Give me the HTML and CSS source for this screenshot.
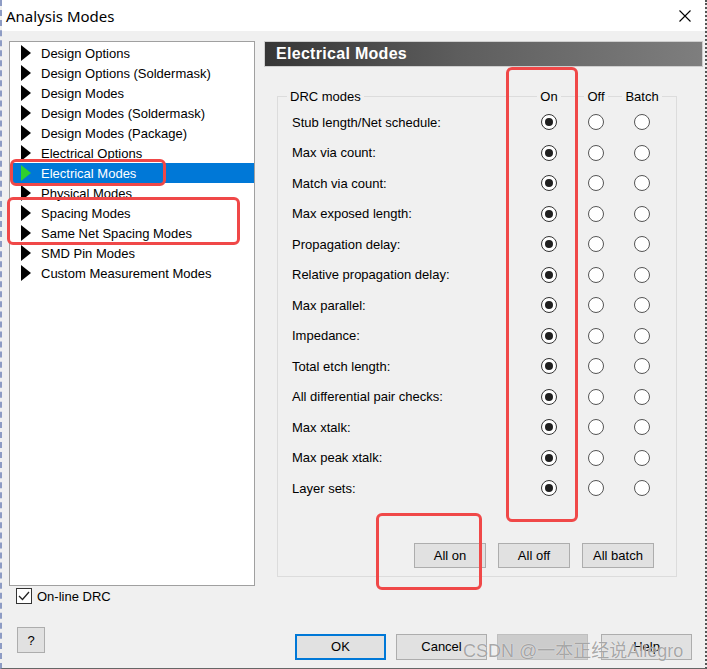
FILE: index.html
```html
<!DOCTYPE html>
<html lang="en">
<head>
    <meta charset="UTF-8">
    <title>Analysis Modes</title>
    <link rel="stylesheet" href="styles.css">
</head>
<body>
<div class="window">
    <div class="titlebar">
        <span class="title">Analysis Modes</span>
        <svg class="close" width="12" height="12" viewBox="0 0 12 12"><path d="M0.5 0.5 L11.5 11.5 M11.5 0.5 L0.5 11.5" stroke="#000" stroke-width="1.1"/></svg>
    </div>

    <div class="client">
        <div class="left">
            <div class="tree">
                <div class="item"><span class="arrow"></span>Design Options</div>
                <div class="item"><span class="arrow"></span>Design Options (Soldermask)</div>
                <div class="item"><span class="arrow"></span>Design Modes</div>
                <div class="item"><span class="arrow"></span>Design Modes (Soldermask)</div>
                <div class="item"><span class="arrow"></span>Design Modes (Package)</div>
                <div class="item"><span class="arrow"></span>Electrical Options</div>
                <div class="item selected"><span class="arrow"></span>Electrical Modes</div>
                <div class="item"><span class="arrow"></span>Physical Modes</div>
                <div class="item"><span class="arrow"></span>Spacing Modes</div>
                <div class="item"><span class="arrow"></span>Same Net Spacing Modes</div>
                <div class="item"><span class="arrow"></span>SMD Pin Modes</div>
                <div class="item"><span class="arrow"></span>Custom Measurement Modes</div>
            </div>
            <label class="checkrow">
                <span class="checkbox"><svg width="14" height="14" viewBox="0 0 14 14"><path d="M2 7 L5.5 10.5 L12 3" fill="none" stroke="#222" stroke-width="1.3"/></svg></span>
                On-line DRC
            </label>
            <button class="btn help-q">?</button>
        </div>

        <div class="right">
            <div class="header">Electrical Modes</div>

            <div class="group">
                <div class="grid heading">
                    <span class="legend">DRC modes</span>
                    <span class="col"><span class="legend">On</span></span>
                    <span class="col"><span class="legend">Off</span></span>
                    <span class="col"><span class="legend">Batch</span></span>
                </div>
                <div class="rows">
                    <div class="grid row"><span>Stub length/Net schedule:</span><span class="col"><i class="radio on"></i></span><span class="col"><i class="radio"></i></span><span class="col"><i class="radio"></i></span></div>
                    <div class="grid row"><span>Max via count:</span><span class="col"><i class="radio on"></i></span><span class="col"><i class="radio"></i></span><span class="col"><i class="radio"></i></span></div>
                    <div class="grid row"><span>Match via count:</span><span class="col"><i class="radio on"></i></span><span class="col"><i class="radio"></i></span><span class="col"><i class="radio"></i></span></div>
                    <div class="grid row"><span>Max exposed length:</span><span class="col"><i class="radio on"></i></span><span class="col"><i class="radio"></i></span><span class="col"><i class="radio"></i></span></div>
                    <div class="grid row"><span>Propagation delay:</span><span class="col"><i class="radio on"></i></span><span class="col"><i class="radio"></i></span><span class="col"><i class="radio"></i></span></div>
                    <div class="grid row"><span>Relative propagation delay:</span><span class="col"><i class="radio on"></i></span><span class="col"><i class="radio"></i></span><span class="col"><i class="radio"></i></span></div>
                    <div class="grid row"><span>Max parallel:</span><span class="col"><i class="radio on"></i></span><span class="col"><i class="radio"></i></span><span class="col"><i class="radio"></i></span></div>
                    <div class="grid row"><span>Impedance:</span><span class="col"><i class="radio on"></i></span><span class="col"><i class="radio"></i></span><span class="col"><i class="radio"></i></span></div>
                    <div class="grid row"><span>Total etch length:</span><span class="col"><i class="radio on"></i></span><span class="col"><i class="radio"></i></span><span class="col"><i class="radio"></i></span></div>
                    <div class="grid row"><span>All differential pair checks:</span><span class="col"><i class="radio on"></i></span><span class="col"><i class="radio"></i></span><span class="col"><i class="radio"></i></span></div>
                    <div class="grid row"><span>Max xtalk:</span><span class="col"><i class="radio on"></i></span><span class="col"><i class="radio"></i></span><span class="col"><i class="radio"></i></span></div>
                    <div class="grid row"><span>Max peak xtalk:</span><span class="col"><i class="radio on"></i></span><span class="col"><i class="radio"></i></span><span class="col"><i class="radio"></i></span></div>
                    <div class="grid row"><span>Layer sets:</span><span class="col"><i class="radio on"></i></span><span class="col"><i class="radio"></i></span><span class="col"><i class="radio"></i></span></div>
                </div>
                <div class="all-buttons">
                    <button class="btn">All on</button>
                    <button class="btn">All off</button>
                    <button class="btn">All batch</button>
                </div>
            </div>

            <div class="dialog-buttons">
                <button class="btn default">OK</button>
                <button class="btn">Cancel</button>
                <button class="btn disabled"></button>
                <button class="btn last">Help</button>
            </div>
        </div>
    </div>

    <!-- red markup drawn over the dialog -->
    <div class="mark mark-selected"></div>
    <div class="mark mark-spacing"></div>
    <div class="mark mark-on"></div>
    <div class="mark mark-allon"></div>

    <div class="watermark">CSDN @一本正经说Allegro</div>
</div>
</body>
</html>
```

FILE: styles.css
```css
body {
    margin: 0;
    background-color: #f0f0f0;
    font-family: "Liberation Sans", Arial, sans-serif;
    font-size: 13px;
    color: #000;
}
.window {
    position: relative;
    width: 707px;
    height: 669px;
    box-sizing: border-box;
    overflow: hidden;
    background-color: #f0f0f0;
    border-left: 2px dashed #8e9cc4;
    border-right: 2px dotted #555;
    border-bottom: 1px solid #666;
}
.titlebar {
    height: 31px;
    background-color: #fff;
    display: flex;
    align-items: center;
    justify-content: space-between;
    padding: 0 14px 0 4px;
}
.title {
    font-family: "Noto Sans", sans-serif;
    font-size: 15px;
}
.client {
    display: flex;
    gap: 9px;
    padding-top: 10px;
    padding-left: 7px;
}
.left {
    width: 246px;
    display: flex;
    flex-direction: column;
}
.tree {
    height: 545px;
    box-sizing: border-box;
    background-color: #fff;
    border: 1px solid #a0a0a0;
    padding-top: 1px;
}
.item {
    height: 20px;
    display: flex;
    align-items: center;
    padding-left: 11px;
    white-space: nowrap;
}
.arrow {
    width: 0;
    height: 0;
    border-top: 8px solid transparent;
    border-bottom: 8px solid transparent;
    border-left: 10px solid #000;
    margin-right: 10px;
}
.item.selected {
    background-color: #0078d7;
    color: #fff;
    margin-left: 2px;
    padding-left: 9px;
}
.item.selected .arrow {
    border-left-color: #2fd12f;
}
.checkrow {
    height: 20px;
    display: flex;
    align-items: center;
    gap: 5px;
    padding-left: 7px;
}
.checkbox {
    width: 14px;
    height: 14px;
    border: 1px solid #333;
    background-color: #fff;
    display: flex;
}
.btn {
    font-family: "Liberation Sans", Arial, sans-serif;
    font-size: 13px;
    color: #000;
    background-color: #e1e1e1;
    border: 1px solid #adadad;
    padding: 0;
    box-sizing: border-box;
}
.help-q {
    width: 28px;
    height: 26px;
    margin-top: 21px;
    margin-left: 8px;
}
.right {
    width: 439px;
}
.header {
    height: 26px;
    box-sizing: border-box;
    border: 1px solid #cfcfcf;
    background: linear-gradient(to right, #363636, #5e5e5e 45%, #7e7e7e);
    color: #fff;
    font-weight: bold;
    font-size: 16px;
    letter-spacing: 0.3px;
    padding-left: 11px;
    display: flex;
    align-items: center;
}
.group {
    margin: 29px 0 0 13px;
    width: 400px;
    box-sizing: border-box;
    border: 1px solid #dcdcdc;
    padding: 0 11px 8px 14px;
}
.grid {
    display: grid;
    grid-template-columns: 1fr 48px 46px 46px;
    align-items: center;
}
.col {
    display: flex;
    justify-content: center;
}
.heading {
    height: 16px;
    margin-top: -9px;
    margin-left: -5px;
}
.heading > .legend {
    justify-self: start;
}
.legend {
    background-color: #f0f0f0;
    padding: 0 3px;
}
.rows {
    margin-top: 3px;
}
.row {
    height: 30.5px;
}
.radio {
    width: 14px;
    height: 14px;
    border: 1px solid #555;
    border-radius: 50%;
    background-color: #fff;
    display: flex;
    align-items: center;
    justify-content: center;
}
.radio.on {
    border-color: #333;
}
.radio.on::after {
    content: "";
    width: 8px;
    height: 8px;
    border-radius: 50%;
    background-color: #1f1f1f;
}
.all-buttons {
    display: flex;
    justify-content: flex-end;
    gap: 12px;
    margin-top: 39px;
    margin-right: 11px;
}
.all-buttons .btn {
    width: 72px;
    height: 25px;
}
.dialog-buttons {
    display: flex;
    gap: 10px;
    margin: 57px 0 0 31px;
}
.dialog-buttons .btn {
    width: 91px;
    height: 26px;
}
.btn.default {
    border: 2px solid #0078d7;
}
.btn.disabled {
    background-color: #cccccc;
    border-color: #bfbfbf;
}
.btn.last {
    margin-left: 3px;
}
.mark {
    position: absolute;
    border: 3px solid #f04848;
    border-radius: 6px;
    box-sizing: border-box;
}
.mark-selected {
    left: 8px;
    top: 159px;
    width: 156px;
    height: 27px;
}
.mark-spacing {
    left: 5px;
    top: 197px;
    width: 233px;
    height: 48px;
}
.mark-on {
    left: 504px;
    top: 67px;
    width: 72px;
    height: 455px;
}
.mark-allon {
    left: 374px;
    top: 513px;
    width: 106px;
    height: 77px;
}
.watermark {
    position: absolute;
    left: 461px;
    top: 640px;
    font-family: "Liberation Sans", "Noto Sans CJK SC", sans-serif;
    font-size: 18px;
    line-height: 22px;
    color: rgba(110, 110, 110, 0.6);
    text-shadow: 0 0 1px #fff;
    white-space: nowrap;
}
```
